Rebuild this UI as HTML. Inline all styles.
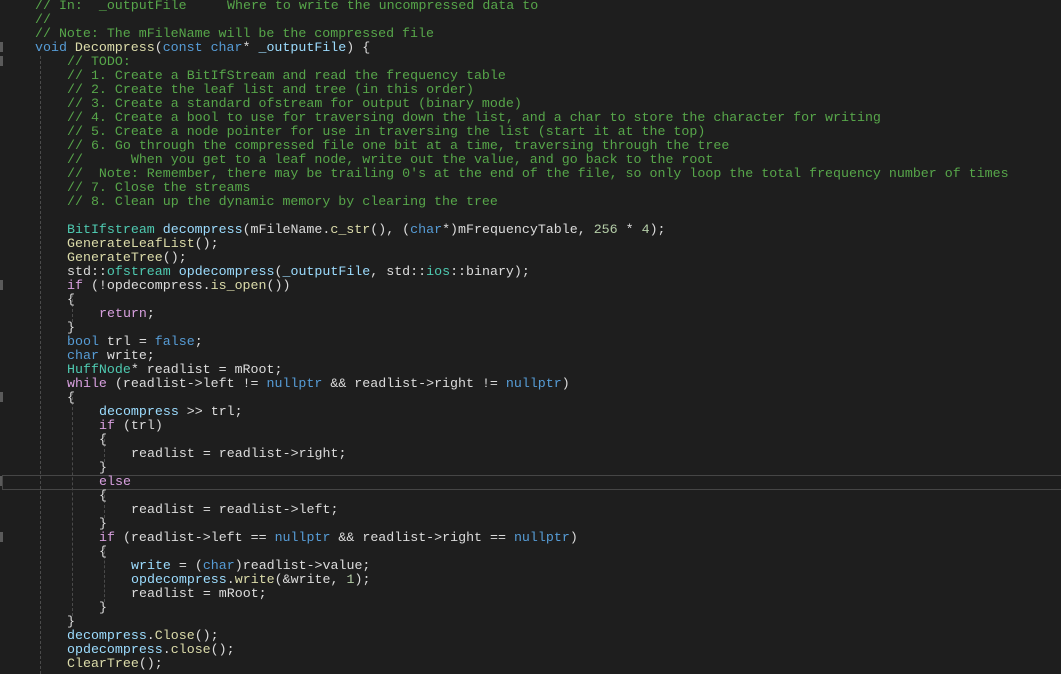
<!DOCTYPE html>
<html><head><meta charset="utf-8"><style>
html,body{margin:0;padding:0;background:#1e1e1e;width:1061px;height:674px;overflow:hidden}
#c{position:absolute;left:0;top:-1px;font-family:"Liberation Mono",monospace;font-size:13.3px;line-height:14px;color:#dcdcdc}
.l{height:14px;position:relative;white-space:pre}
.c{color:#57a64a}.k{color:#569cd6}.p{color:#d8a0df}.f{color:#dcdcaa}.t{color:#4ec9b0}.v{color:#9cdcfe}.n{color:#b5cea8}
.g{position:absolute;width:0;border-left:1px dashed #4a4a4a}
.m{position:absolute;left:0;width:3px;height:10px;background:#5a5a5a}
</style></head><body>
<div class="g" style="left:40px;top:56px;height:618px"></div>
<div class="g" style="left:72px;top:294px;height:28px"></div>
<div class="g" style="left:72px;top:392px;height:224px"></div>
<div class="g" style="left:104px;top:434px;height:28px"></div>
<div class="g" style="left:104px;top:490px;height:28px"></div>
<div class="g" style="left:104px;top:546px;height:56px"></div>
<div class="m" style="top:42px"></div><div class="m" style="top:56px"></div>
<div class="m" style="top:280px"></div><div class="m" style="top:392px"></div>
<div class="m" style="top:476px"></div><div class="m" style="top:532px"></div>
<div style="position:absolute;left:2px;top:475px;width:1059px;height:13px;border:1px solid #464646"></div>
<div id="c"><div class="l" style="left:35px"><span class="c">// In:  _outputFile</span><span class="c" style="position:absolute;left:192px">Where to write the uncompressed data to</span></div><div class="l" style="left:35px"><span class="c">//</span></div><div class="l" style="left:35px"><span class="c">// Note: The mFileName will be the compressed file</span></div><div class="l" style="left:35px"><span class="k">void</span> <span class="f">Decompress</span>(<span class="k">const</span> <span class="k">char</span>* <span class="v">_outputFile</span>) {</div><div class="l" style="left:67px"><span class="c">// TODO:</span></div><div class="l" style="left:67px"><span class="c">// 1. Create a BitIfStream and read the frequency table</span></div><div class="l" style="left:67px"><span class="c">// 2. Create the leaf list and tree (in this order)</span></div><div class="l" style="left:67px"><span class="c">// 3. Create a standard ofstream for output (binary mode)</span></div><div class="l" style="left:67px"><span class="c">// 4. Create a bool to use for traversing down the list, and a char to store the character for writing</span></div><div class="l" style="left:67px"><span class="c">// 5. Create a node pointer for use in traversing the list (start it at the top)</span></div><div class="l" style="left:67px"><span class="c">// 6. Go through the compressed file one bit at a time, traversing through the tree</span></div><div class="l" style="left:67px"><span class="c">//      When you get to a leaf node, write out the value, and go back to the root</span></div><div class="l" style="left:67px"><span class="c">//  Note: Remember, there may be trailing 0's at the end of the file, so only loop the total frequency number of times</span></div><div class="l" style="left:67px"><span class="c">// 7. Close the streams</span></div><div class="l" style="left:67px"><span class="c">// 8. Clean up the dynamic memory by clearing the tree</span></div><div class="l"></div><div class="l" style="left:67px"><span class="t">BitIfstream</span> <span class="v">decompress</span>(mFileName.<span class="f">c_str</span>(), (<span class="k">char</span>*)mFrequencyTable, <span class="n">256</span> * <span class="n">4</span>);</div><div class="l" style="left:67px"><span class="f">GenerateLeafList</span>();</div><div class="l" style="left:67px"><span class="f">GenerateTree</span>();</div><div class="l" style="left:67px">std::<span class="t">ofstream</span> <span class="v">opdecompress</span>(<span class="v">_outputFile</span>, std::<span class="t">ios</span>::binary);</div><div class="l" style="left:67px"><span class="p">if</span> (!opdecompress.<span class="f">is_open</span>())</div><div class="l" style="left:67px">{</div><div class="l" style="left:99px"><span class="p">return</span>;</div><div class="l" style="left:67px">}</div><div class="l" style="left:67px"><span class="k">bool</span> trl = <span class="k">false</span>;</div><div class="l" style="left:67px"><span class="k">char</span> write;</div><div class="l" style="left:67px"><span class="t">HuffNode</span>* readlist = mRoot;</div><div class="l" style="left:67px"><span class="p">while</span> (readlist-&gt;left != <span class="k">nullptr</span> &amp;&amp; readlist-&gt;right != <span class="k">nullptr</span>)</div><div class="l" style="left:67px">{</div><div class="l" style="left:99px"><span class="v">decompress</span> &gt;&gt; trl;</div><div class="l" style="left:99px"><span class="p">if</span> (trl)</div><div class="l" style="left:99px">{</div><div class="l" style="left:131px">readlist = readlist-&gt;right;</div><div class="l" style="left:99px">}</div><div class="l" style="left:99px"><span class="p">else</span></div><div class="l" style="left:99px">{</div><div class="l" style="left:131px">readlist = readlist-&gt;left;</div><div class="l" style="left:99px">}</div><div class="l" style="left:99px"><span class="p">if</span> (readlist-&gt;left == <span class="k">nullptr</span> &amp;&amp; readlist-&gt;right == <span class="k">nullptr</span>)</div><div class="l" style="left:99px">{</div><div class="l" style="left:131px"><span class="v">write</span> = (<span class="k">char</span>)readlist-&gt;value;</div><div class="l" style="left:131px"><span class="v">opdecompress</span>.<span class="f">write</span>(&amp;write, <span class="n">1</span>);</div><div class="l" style="left:131px">readlist = mRoot;</div><div class="l" style="left:99px">}</div><div class="l" style="left:67px">}</div><div class="l" style="left:67px"><span class="v">decompress</span>.<span class="f">Close</span>();</div><div class="l" style="left:67px"><span class="v">opdecompress</span>.<span class="f">close</span>();</div><div class="l" style="left:67px"><span class="f">ClearTree</span>();</div></div>
</body></html>
